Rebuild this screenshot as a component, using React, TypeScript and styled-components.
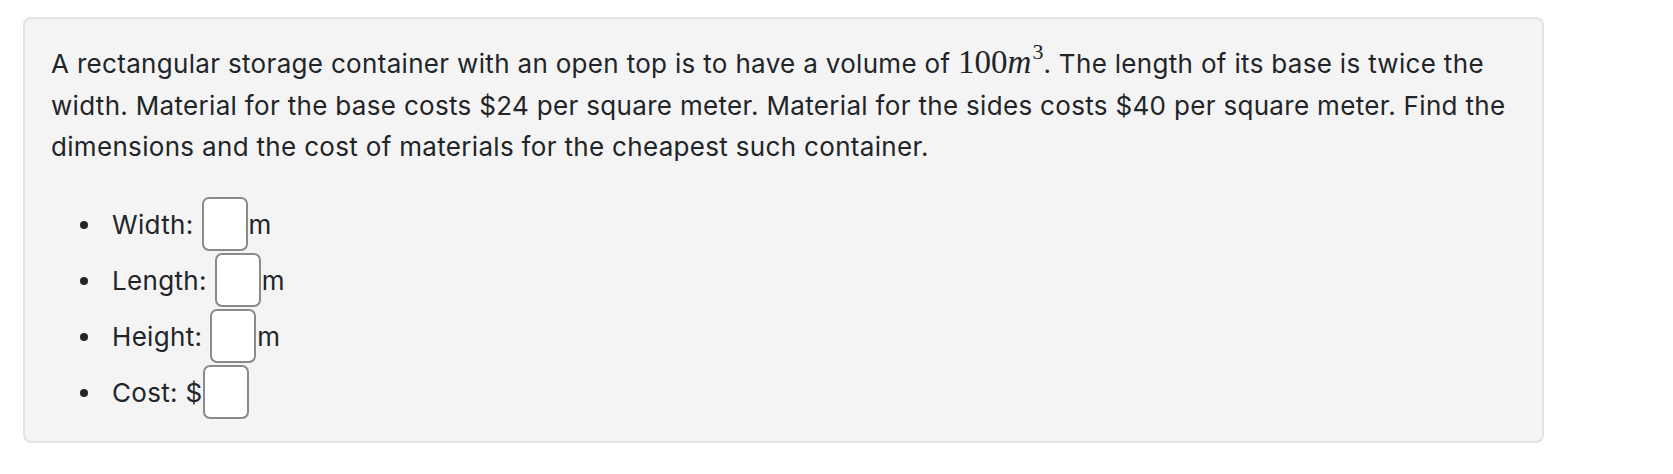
import React from "react";
import styled, { createGlobalStyle } from "styled-components";

const Global = createGlobalStyle`
  html, body { margin: 0; padding: 0; background: #ffffff; }
  body { font-family: Inter, "Noto Sans", sans-serif; color: #212529; }
`;

const Page = styled.div`
  padding: 17px 0 0 23px;
`;

const Card = styled.section`
  box-sizing: border-box;
  width: 1521px;
  height: 426px;
  background: #f4f4f4;
  border: 2px solid #e3e3e3;
  border-radius: 8px;
  padding: 23px 24px 20px 26px;
`;

const Prompt = styled.p`
  margin: 0;
  font-size: 26px;
  line-height: 41.6px;
  letter-spacing: 0.32px;
`;

const Math = styled.span`
  font-family: "Liberation Serif", "DejaVu Serif", serif;
  font-size: 33px;
  letter-spacing: 0;
  white-space: nowrap;
`;

const Var = styled.i`
  font-style: italic;
`;

const Sup = styled.sup`
  font-size: 22px;
  line-height: 0;
  vertical-align: 14px;
  margin-left: 1px;
`;

const List = styled.ul`
  margin: 29px 0 0;
  padding-left: 61px;
  font-size: 26px;
  line-height: 41.6px;
  letter-spacing: 0.32px;
  list-style: none;
`;

const Item = styled.li`
  position: relative;
  height: 56px;

  &::before {
    content: "";
    position: absolute;
    left: -32px;
    top: 24px;
    width: 8px;
    height: 8px;
    border-radius: 50%;
    background: #212529;
  }
`;

const Blank = styled.span<{ $gap?: boolean }>`
  display: inline-block;
  box-sizing: border-box;
  width: 46px;
  height: 54px;
  background: #ffffff;
  border: 2px solid #8a8a8a;
  border-radius: 7px;
  vertical-align: -17px;
  margin-left: ${(p) => (p.$gap ? "8px" : "0")};
  margin-right: 1px;
`;

const rows: { label: string; unit: string; gap: boolean }[] = [
  { label: "Width:", unit: "m", gap: true },
  { label: "Length:", unit: "m", gap: true },
  { label: "Height:", unit: "m", gap: true },
  { label: "Cost: $", unit: "", gap: false },
];

export default function App() {
  return (
    <>
      <Global />
      <Page>
        <Card>
          <Prompt>
            A rectangular storage container with an open top is to have a volume of{" "}
            <Math>
              100<Var>m</Var>
              <Sup>3</Sup>
            </Math>
            . The length of its base is twice the width. Material for the base costs $24 per
            square meter. Material for the sides costs $40 per square meter. Find the
            dimensions and the cost of materials for the cheapest such container.
          </Prompt>
          <List>
            {rows.map((r) => (
              <Item key={r.label}>
                {r.label}
                <Blank $gap={r.gap} />
                {r.unit}
              </Item>
            ))}
          </List>
        </Card>
      </Page>
    </>
  );
}
